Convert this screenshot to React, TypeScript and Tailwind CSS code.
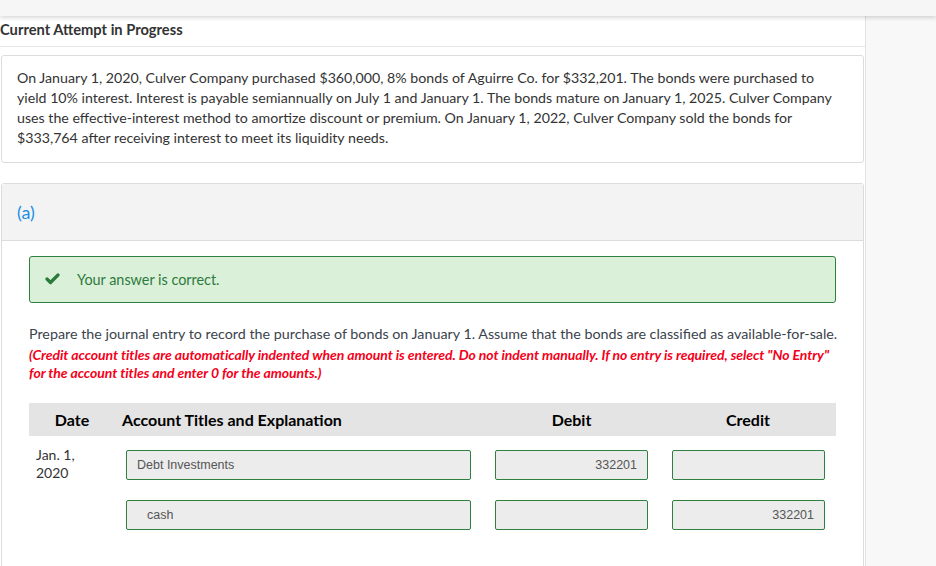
import React from 'react';

const rows = [
    { date: ['Jan. 1,', '2020'], account: 'Debt Investments', indent: false, debit: '332201', credit: '' },
    { date: [], account: 'cash', indent: true, debit: '', credit: '332201' },
];

const Field = ({ value, right, indent }: { value: string; right?: boolean; indent?: boolean }) => (
    <div
        className={`h-[30px] w-full flex items-center bg-[#ececec] border border-[#2f8040] rounded-[2px] text-[12.5px] text-[#555] font-['Liberation_Sans',Arial,sans-serif] ${right ? 'justify-end pr-[10px]' : indent ? 'pl-[20px]' : 'pl-[10px]'}`}
    >
        {value}
    </div>
);

export default function App() {
    return (
        <div className="w-[936px] h-[566px] overflow-hidden bg-[#f8f8f8] font-['Lato',sans-serif] relative">
            {/* top bar */}
            <div className="h-[16px] bg-[#f6f6f6] shadow-[0_2px_4px_rgba(0,0,0,0.15)] relative z-10" />

            <div className="flex">
                <div className="w-[865px] bg-white min-h-[560px]">
                    <div className="pt-[3px] pb-[7px] border-b border-[#e8e8e8] leading-[20px] text-[14.7px] font-bold text-[#333]">
                        Current Attempt in Progress
                    </div>

                    <div className="mt-[8px] ml-px mr-px border border-[#dcdcdc] rounded-[3px] pl-[15px] pr-[20px] pt-[12px] pb-[14px] text-[14.2px] leading-[20px] text-[#333]">
                        On January 1, 2020, Culver Company purchased $360,000, 8% bonds of Aguirre Co. for $332,201. The bonds were purchased to yield 10% interest. Interest is payable semiannually on July 1 and January 1. The bonds mature on January 1, 2025. Culver Company uses the effective-interest method to amortize discount or premium. On January 1, 2022, Culver Company sold the bonds for $333,764 after receiving interest to meet its liquidity needs.
                    </div>

                    <div className="mt-[20px] ml-px mr-px border border-[#dcdcdc] rounded-t-[3px]">
                        <div className="h-[57px] bg-[#f3f3f3] border-b border-[#dcdcdc] flex items-center pl-[15px] text-[18px] text-[#1a8fe3]">
                            (a)
                        </div>

                        <div className="px-[27px] pt-[15px] pb-[40px]">
                            <div className="h-[47px] flex items-center bg-[#dbf0d8] border border-[#2f8040] rounded-[3px] text-[14.4px] text-[#2d7a3e]">
                                <svg width="15" height="12" viewBox="0 0 15 12" className="ml-[15px] mr-[17px] mb-[2px]">
                                    <path d="M2 6 L5.5 9.5 L13 2" fill="none" stroke="#2a7a3a" strokeWidth="3.2" strokeLinecap="round" strokeLinejoin="round" />
                                </svg>
                                Your answer is correct.
                            </div>

                            <p className="mt-[21px] text-[14.3px] leading-[20px] text-[#3a434c] whitespace-nowrap">
                                Prepare the journal entry to record the purchase of bonds on January 1. Assume that the bonds are classified as available-for-sale.
                            </p>
                            <p className="mt-[2px] mr-[-6px] text-[14px] leading-[18px] font-bold italic text-[#f5001a] tracking-[-0.07px]">
                                (Credit account titles are automatically indented when amount is entered. Do not indent manually. If no entry is required, select "No Entry" for the account titles and enter 0 for the amounts.)
                            </p>

                            <table className="mt-[21px] w-[807px] border-collapse table-fixed">
                                <colgroup>
                                    <col className="w-[86px]" />
                                    <col className="w-[368px]" />
                                    <col className="w-[177px]" />
                                    <col className="w-[176px]" />
                                </colgroup>
                                <thead>
                                    <tr className="h-[33px] bg-[#e4e4e4] text-[16px] font-bold text-black">
                                        <th className="text-center">Date</th>
                                        <th className="text-left pl-[7px]">Account Titles and Explanation</th>
                                        <th className="text-center">Debit</th>
                                        <th className="text-center">Credit</th>
                                    </tr>
                                </thead>
                                <tbody>
                                    {rows.map((r, i) => (
                                        <tr key={i} className="align-top">
                                            <td className={`pl-[7px] text-[14px] leading-[18px] text-[#333] ${i === 0 ? 'pt-[10px]' : 'pt-[18px]'}`}>
                                                {r.date.map(d => <div key={d}>{d}</div>)}
                                            </td>
                                            <td className={`pl-[11px] pr-[12px] ${i === 0 ? 'pt-[14px]' : 'pt-[18px]'}`}>
                                                <Field value={r.account} indent={r.indent} />
                                            </td>
                                            <td className={`pl-[12px] pr-[12px] ${i === 0 ? 'pt-[14px]' : 'pt-[18px]'}`}>
                                                <Field value={r.debit} right />
                                            </td>
                                            <td className={`pl-[12px] pr-[11px] ${i === 0 ? 'pt-[14px]' : 'pt-[18px]'}`}>
                                                <Field value={r.credit} right />
                                            </td>
                                        </tr>
                                    ))}
                                </tbody>
                            </table>
                        </div>
                    </div>
                </div>
                <div className="flex-1 bg-[#f8f8f8] border-l border-[#e2e2e2]" />
            </div>
        </div>
    );
}
